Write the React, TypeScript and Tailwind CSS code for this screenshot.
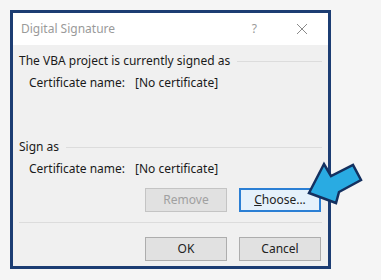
import React from "react"

function Btn({ children, disabled, focused }: { children: React.ReactNode; disabled?: boolean; focused?: boolean }) {
  return (
    <div
      className={
        "w-[82px] h-[24px] flex items-center justify-center text-[12px] " +
        (focused
          ? "border-2 border-[#2b7fd4] bg-[#e5f1fb] text-[#222]"
          : disabled
          ? "border border-[#c4c4c4] bg-[#e1e1e1] text-[#a0a0a0]"
          : "border border-[#adadad] bg-[#e1e1e1] text-[#222]")
      }
    >
      {children}
    </div>
  )
}

export default function App() {
  return (
    <div className="w-[381px] h-[280px] bg-[#f5f5f5] pt-[10px] pl-[10px] relative" style={{ fontFamily: '"Noto Sans", "Open Sans", sans-serif' }}>
      <div className="w-[321px] h-[259px] border-[3px] border-[#1c3d73] bg-[#f0f0f0] flex flex-col">
        <div className="h-[32px] bg-white flex items-center pl-[8px] text-[12px] text-[#9a9a9a]">
          <span>Digital Signature</span>
          <span className="ml-auto mr-[39px] text-[#9a9a9a]">?</span>
          <svg width="12" height="12" viewBox="0 0 12 12" className="mr-[20px]">
            <path d="M1 1L11 11M11 1L1 11" stroke="#8a8a8a" strokeWidth="1" />
          </svg>
        </div>
        <div className="flex flex-col pl-[6px] pr-[6px] text-[12px] text-[#1a1a1a]">
          <div className="flex items-center mt-[8px] h-[16px]">
            <span>The VBA project is currently signed as</span>
            <div className="flex-1 h-px bg-[#dcdcdc] ml-[7px]" />
          </div>
          <div className="flex mt-[6px] pl-[10px] h-[16px] items-center">
            <span className="w-[106px]">Certificate name:</span>
            <span>[No certificate]</span>
          </div>
          <div className="flex items-center mt-[48px] h-[16px]">
            <span>Sign as</span>
            <div className="flex-1 h-px bg-[#dcdcdc] ml-[7px]" />
          </div>
          <div className="flex mt-[6px] pl-[10px] h-[16px] items-center">
            <span className="w-[106px]">Certificate name:</span>
            <span>[No certificate]</span>
          </div>
          <div className="flex justify-end gap-[12px] mt-[11px] pr-[1px]">
            <Btn disabled>Remove</Btn>
            <Btn focused>
              <span><span className="underline">C</span>hoose...</span>
            </Btn>
          </div>
          <div className="h-px bg-[#dcdcdc] mt-[10px]" />
          <div className="flex justify-end gap-[12px] mt-[14px] pr-[1px]">
            <Btn>OK</Btn>
            <Btn>Cancel</Btn>
          </div>
        </div>
      </div>
      <svg className="absolute left-0 top-0" width="381" height="280" viewBox="0 0 381 280">
        <polygon
          points="309,193 324,164 331,176 353,165 361,180 339,192 336,203"
          fill="#29abe2"
          stroke="#14305f"
          strokeWidth="2.5"
          strokeLinejoin="miter"
        />
      </svg>
    </div>
  )
}
